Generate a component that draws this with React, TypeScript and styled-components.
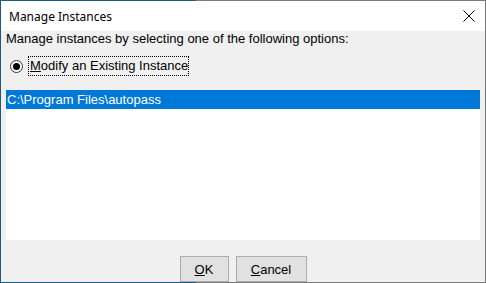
import React from "react";
import styled, { createGlobalStyle } from "styled-components";

const Global = createGlobalStyle`
  html, body { margin: 0; padding: 0; background: #ffffff; }
  body { width: 486px; height: 283px; overflow: hidden; }
`;

const Window = styled.div`
  box-sizing: border-box;
  width: 486px;
  height: 283px;
  border: 1px solid;
  border-image: linear-gradient(to right, #1b5b7c 196px, #7a7a7a 196px) 1;
  display: flex;
  flex-direction: column;
  overflow: hidden;
  background: #f0f0f0;
`;

const TitleBar = styled.div`
  height: 30px;
  flex: none;
  background: #ffffff;
  display: flex;
  align-items: center;
  justify-content: space-between;
  padding: 0 9px 0 8px;
`;

const Title = styled.span`
  font-family: "Segoe UI", "Noto Sans", sans-serif;
  font-size: 12px;
  color: #000;
`;

const CloseIcon = styled.svg`
  width: 12px;
  height: 12px;
  margin-right: 1px;
`;

const Body = styled.div`
  flex: 1;
  display: flex;
  flex-direction: column;
  padding: 0 5px 0 5px;
  font-family: "Liberation Sans", Arial, sans-serif;
  font-size: 13px;
  color: #000;
`;

const Prompt = styled.div`
  height: 17px;
  line-height: 17px;
  margin-top: -1px;
`;

const RadioRow = styled.label`
  display: flex;
  align-items: center;
  height: 20px;
  margin-top: 9px;
  padding-left: 4px;
`;

const RadioCircle = styled.span`
  box-sizing: border-box;
  width: 13px;
  height: 13px;
  border-radius: 50%;
  border: 1px solid #333333;
  background: #fff;
  display: flex;
  align-items: center;
  justify-content: center;
  margin-right: 5px;
  &::after {
    content: "";
    width: 7px;
    height: 7px;
    border-radius: 50%;
    background: #000;
  }
`;

const FocusLabel = styled.span`
  border: 1px dotted #000;
  padding: 1px 0 1px 1px;
  line-height: 16px;
`;

const U = styled.span`
  text-decoration: underline;
`;

const List = styled.div`
  margin-top: 14px;
  height: 150px;
  background: #ffffff;
`;

const ListItem = styled.div<{ $selected?: boolean }>`
  height: 19px;
  line-height: 19px;
  padding-left: 1px;
  background: ${(p) => (p.$selected ? "#0078d7" : "transparent")};
  color: ${(p) => (p.$selected ? "#ffffff" : "#000000")};
`;

const ButtonRow = styled.div`
  display: flex;
  justify-content: center;
  gap: 7px;
  margin-top: 16px;
`;

const Button = styled.button<{ $w: number }>`
  box-sizing: border-box;
  width: ${(p) => p.$w}px;
  height: 26px;
  background: #e1e1e1;
  border: 1px solid #adadad;
  font-family: "Liberation Sans", Arial, sans-serif;
  font-size: 13px;
  color: #000;
  padding: 0;
  flex: none;
`;

export default function App() {
  return (
    <>
      <Global />
      <Window>
        <TitleBar>
          <Title>Manage Instances</Title>
          <CloseIcon viewBox="0 0 12 12">
            <path d="M0.5 0.5 L11.5 11.5 M11.5 0.5 L0.5 11.5" stroke="#000" strokeWidth="1" fill="none" />
          </CloseIcon>
        </TitleBar>
        <Body>
          <Prompt>Manage instances by selecting one of the following options:</Prompt>
          <RadioRow>
            <RadioCircle />
            <FocusLabel>
              <U>M</U>odify an Existing Instance
            </FocusLabel>
          </RadioRow>
          <List>
            <ListItem $selected>C:\Program Files\autopass</ListItem>
          </List>
          <ButtonRow>
            <Button $w={49}>
              <U>O</U>K
            </Button>
            <Button $w={71}>
              <U>C</U>ancel
            </Button>
          </ButtonRow>
        </Body>
      </Window>
    </>
  );
}
